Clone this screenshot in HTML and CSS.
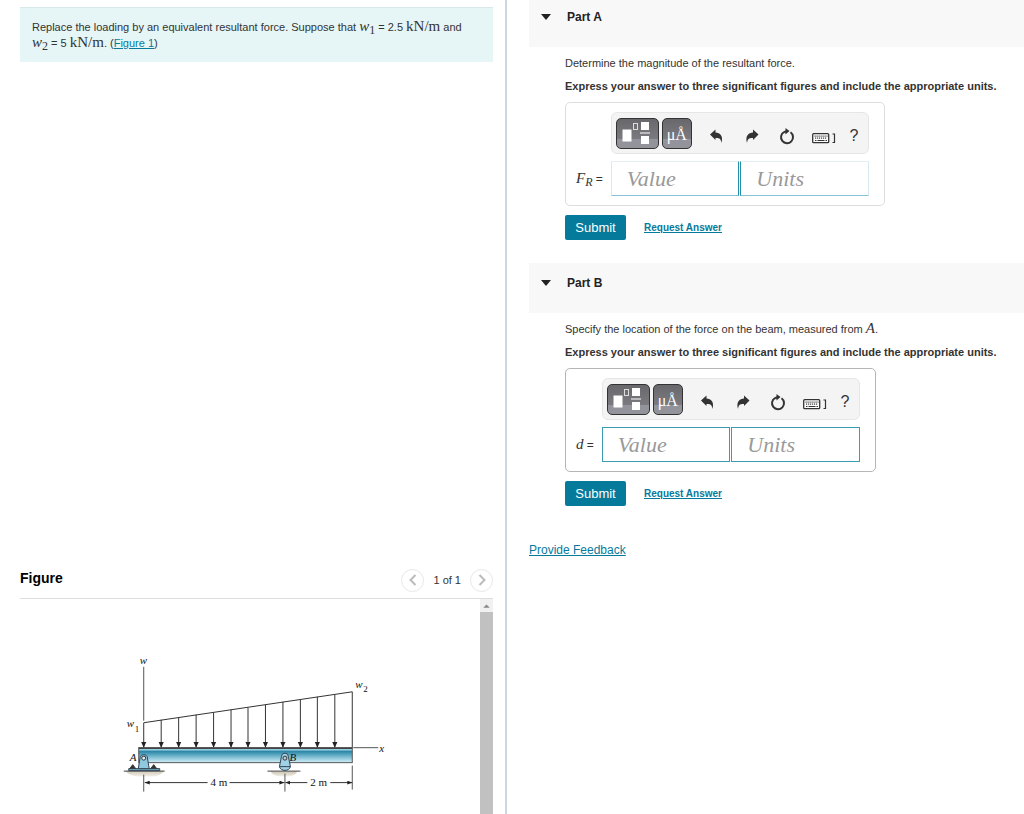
FILE: index.html
```html
<!DOCTYPE html>
<html lang="en">
<head>
<meta charset="utf-8">
<title>Equivalent Resultant Force</title>
<link rel="stylesheet" href="styles.css">
</head>
<body>
<svg class="defs" aria-hidden="true">
  <symbol id="templates" viewBox="1 1 41 29">
    <rect x="6.500" y="11.500" width="9" height="12" fill="#fff"/>
    <rect x="17.500" y="5.500" width="4" height="6" fill="none" stroke="#ddd"/>
    <rect x="25" y="4" width="8" height="8" fill="#fff"/>
    <rect x="24" y="14" width="10" height="2" fill="#bbb"/>
    <rect x="25" y="18" width="8" height="8" fill="#fff"/>
  </symbol>
  <symbol id="undo" viewBox="0 0 14 14">
    <path d="M0 5.500 5.500 .500v3C10 3.500 13.500 7 11.500 14c-.5-4-2-5.200-6-5V11Z" fill="#333"/>
  </symbol>
  <symbol id="redo" viewBox="0 0 14 14">
    <path d="M13.500 5.500 8 .500v3C3.500 3.500 0 7 2 14c.5-4 2-5.200 6-5V11Z" fill="#333"/>
  </symbol>
  <symbol id="reset" viewBox="0 0 16 17">
    <path d="M11.500 4.300A6 6 0 1 1 5 4" fill="none" stroke="#333" stroke-width="2"/>
    <path d="M6.500 0v6.500L10.500 3Z" fill="#333"/>
    <path d="M5 4.200 8 3" stroke="#333" stroke-width="2"/>
  </symbol>
  <symbol id="keyboard" viewBox="0 0 24 12">
    <rect x=".7" y="1.700" width="16" height="9" rx="1" fill="#fff" stroke="#333" stroke-width="1.300"/>
    <path d="M2.500 4.200h13M3 6.200h12" stroke="#444" stroke-width="1.200" stroke-dasharray="1.200 .8"/>
    <path d="M3 8.500h1.500M5.500 8.500h7M13.500 8.500h1.500" stroke="#333" stroke-width="1.200"/>
    <path d="M20.500 2h2v8.500h-2" fill="none" stroke="#333" stroke-width="1.200"/>
  </symbol>
</svg>

<main class="layout">
  <section class="left">
    <p class="statement">Replace the loading by an equivalent resultant force. Suppose that <span class="math"><i>w</i><sub>1</sub></span> = 2.5 <span class="math">kN/m</span> and <span class="math"><i>w</i><sub>2</sub></span> = 5 <span class="math">kN/m</span>. (<a href="#figure">Figure 1</a>)</p>

    <section class="figure" id="figure">
      <header class="figure-head">
        <h2>Figure</h2>
        <nav class="pager" aria-label="Figures">
          <button class="round" type="button" aria-label="Previous figure"><svg viewBox="0 0 10 12"><path d="M7.500 1 2.500 6l5 5"/></svg></button>
          <span>1 of 1</span>
          <button class="round" type="button" aria-label="Next figure"><svg viewBox="0 0 10 12"><path d="m2.500 1 5 5-5 5"/></svg></button>
        </nav>
      </header>
      <div class="figure-body">
        <svg class="beam" viewBox="20 599 461 215" role="img" aria-label="Beam with a linearly increasing distributed load">
          <defs>
            <linearGradient id="steel" x1="0" y1="0" x2="0" y2="1">
              <stop offset="0" stop-color="#a9dcec"/>
              <stop offset=".16" stop-color="#8cc8dc"/>
              <stop offset=".24" stop-color="#2b86a4"/>
              <stop offset=".4" stop-color="#4a9db8"/>
              <stop offset="1" stop-color="#d4f0fa"/>
            </linearGradient>
            <linearGradient id="ground" x1="0" y1="0" x2="0" y2="1">
              <stop offset="0" stop-color="#cdc6b4"/>
              <stop offset="1" stop-color="#f4f1ea"/>
            </linearGradient>
            <marker id="down" viewBox="0 0 6 6" refX="6" refY="3" markerWidth="6" markerHeight="6" markerUnits="userSpaceOnUse" orient="auto"><path d="M0 .3 6 3 0 5.700Z" fill="#222"/></marker>
            <marker id="dim" viewBox="0 0 5 4" refX="5" refY="2" markerWidth="5" markerHeight="4" markerUnits="userSpaceOnUse" orient="auto"><path d="M0 0 5 2 0 4Z" fill="#222"/></marker>
          </defs>
          <path class="axis" d="M144 667v54M354 748h25"/>
          <path class="line" d="M144 723 353 692V748"/>
          <g class="line">
            <path d="M144 723v25" marker-end="url(#down)"/><path d="M161.500 720v28" marker-end="url(#down)"/>
            <path d="M179 718v30" marker-end="url(#down)"/><path d="M196.500 715v33" marker-end="url(#down)"/>
            <path d="M214 713v35" marker-end="url(#down)"/><path d="M231.500 710v38" marker-end="url(#down)"/>
            <path d="M248.500 708v40" marker-end="url(#down)"/><path d="M266 705v43" marker-end="url(#down)"/>
            <path d="M283.500 702v46" marker-end="url(#down)"/><path d="M301 700v48" marker-end="url(#down)"/>
            <path d="M318 697v51" marker-end="url(#down)"/><path d="M335.500 695v53" marker-end="url(#down)"/>
          </g>
          <rect x="139" y="748" width="214" height="15" fill="url(#steel)" stroke="#555"/>
          <path d="M139 748.500h214" stroke="#444" stroke-width="1.500"/>
          <path d="M126 771h38c-2 5-8 6-18 6s-18-1-20-6Z" fill="url(#ground)"/>
          <path d="M124 771.500h41" stroke="#444"/>
          <path d="M129 771v-2h31v2Z" fill="#6daac0" stroke="#345"/>
          <path d="m130 769 3-4 3 4M151 769l3-4 3 4" fill="#333" stroke="#333"/>
          <path d="M138.500 769 140.500 757a4 4 0 0 1 7 0L149.500 769Z" fill="#8fc8df" stroke="#345"/>
          <circle cx="144" cy="758.500" r="2" fill="#def" stroke="#333"/>
          <path d="M271 772h27c-2 3-4 5-13 5s-12-2-14-5Z" fill="url(#ground)"/>
          <path d="M268 771.500h33" stroke="#444"/>
          <path d="M280 767 282 757a3.500 3.500 0 0 1 7 0L291 767c-1 5-10 5-11 0Z" fill="#9fd2e6" stroke="#345"/>
          <path d="M280 767h11" stroke="#345"/>
          <circle cx="285.500" cy="758.500" r="2" fill="#bcd" stroke="#333"/>
          <path class="axis" d="M144 775v17M285.500 774v18M353 766v24"/>
          <path class="line" d="M208 783H145" marker-end="url(#dim)"/><path class="line" d="M230 783h55" marker-end="url(#dim)"/>
          <path class="line" d="M308 783h-22" marker-end="url(#dim)"/><path class="line" d="M331 783h22" marker-end="url(#dim)"/>
          <g class="label">
            <text class="it" x="140" y="664">w</text>
            <text class="it" x="127" y="727">w</text><text class="small" x="135" y="732">1</text>
            <text class="it" x="356" y="688">w</text><text class="small" x="364" y="692">2</text>
            <text class="it" x="380" y="752">x</text>
            <text class="it" x="130" y="761">A</text><text class="it" x="290" y="761">B</text>
            <text x="211" y="786">4 m</text><text x="311" y="786">2 m</text>
          </g>
        </svg>
        <div class="scrollbar" aria-hidden="true">
          <svg viewBox="0 0 12 12"><path d="M3 8 6 5l3 3Z" fill="#888"/></svg>
          <div class="thumb"></div>
        </div>
      </div>
    </section>
  </section>

  <section class="right">
    <section class="part">
      <header class="part-head"><svg viewBox="0 0 10 6"><path d="M0 0h10L5 6Z"/></svg><h2>Part A</h2></header>
      <div class="part-body">
        <p>Determine the magnitude of the resultant force.</p>
        <p class="bold">Express your answer to three significant figures and include the appropriate units.</p>
        <form class="answer soft" id="form-a">
          <div class="toolbar">
            <button class="dark wide" type="button" aria-label="Templates"><svg><use href="#templates"/></svg></button>
            <button class="dark" type="button">μÅ</button>
            <button class="tool" type="button" aria-label="Undo"><svg><use href="#undo"/></svg></button>
            <button class="tool" type="button" aria-label="Redo"><svg><use href="#redo"/></svg></button>
            <button class="tool" type="button" aria-label="Reset"><svg class="reset"><use href="#reset"/></svg></button>
            <button class="tool shortcuts" type="button" aria-label="Keyboard shortcuts"><svg class="keys"><use href="#keyboard"/></svg></button>
            <button class="tool help" type="button">?</button>
          </div>
          <label for="value-a"><i>F<sub>R</sub></i> =</label>
          <div class="fields">
            <input id="value-a" type="text" placeholder="Value">
            <input type="text" placeholder="Units" aria-label="Units">
          </div>
        </form>
        <div class="actions"><button class="submit" type="submit" form="form-a">Submit</button><a href="#">Request Answer</a></div>
      </div>
    </section>

    <section class="part">
      <header class="part-head"><svg viewBox="0 0 10 6"><path d="M0 0h10L5 6Z"/></svg><h2>Part B</h2></header>
      <div class="part-body">
        <p>Specify the location of the force on the beam, measured from <span class="math"><i>A</i></span>.</p>
        <p class="bold">Express your answer to three significant figures and include the appropriate units.</p>
        <form class="answer" id="form-b">
          <div class="toolbar">
            <button class="dark wide" type="button" aria-label="Templates"><svg><use href="#templates"/></svg></button>
            <button class="dark" type="button">μÅ</button>
            <button class="tool" type="button" aria-label="Undo"><svg><use href="#undo"/></svg></button>
            <button class="tool" type="button" aria-label="Redo"><svg><use href="#redo"/></svg></button>
            <button class="tool" type="button" aria-label="Reset"><svg class="reset"><use href="#reset"/></svg></button>
            <button class="tool shortcuts" type="button" aria-label="Keyboard shortcuts"><svg class="keys"><use href="#keyboard"/></svg></button>
            <button class="tool help" type="button">?</button>
          </div>
          <label for="value-b"><i>d</i> =</label>
          <div class="fields">
            <input id="value-b" type="text" placeholder="Value">
            <input type="text" placeholder="Units" aria-label="Units">
          </div>
        </form>
        <div class="actions"><button class="submit" type="submit" form="form-b">Submit</button><a href="#">Request Answer</a></div>
      </div>
    </section>
    <a class="feedback" href="#">Provide Feedback</a>
  </section>
</main>
</body>
</html>
```
FILE: styles.css
```css
* { box-sizing: border-box; }
body {
  margin: 0;
  background: #fff;
  color: #333;
  font: 11px/16px "Liberation Sans", Arial, sans-serif;
}
p, h2 { margin: 0; }
a { color: #067a9c; }
button { padding: 0; border: 0; background: none; font: inherit; color: inherit; }
sub { font-size: 80%; line-height: 0; vertical-align: -3px; }
svg { display: block; }
.defs { position: absolute; width: 0; height: 0; }

.layout {
  display: grid;
  grid-template-columns: minmax(0, 507fr) minmax(0, 517fr);
  min-height: 100vh;
}
.left {
  display: flex;
  flex-direction: column;
  justify-content: space-between;
  padding: 7px 12px 0 20px;
  border-right: 2px solid #cbd6e0;
}
.statement {
  padding: 11px 20px 11px 12px;
  background: #e6f6f7;
  border-top: 1px solid #d9e9e9;
}
.math {
  font-family: "Liberation Serif", "Times New Roman", serif;
  font-size: 15px;
  line-height: 14px;
  white-space: nowrap;
}

.figure-head {
  display: flex;
  justify-content: space-between;
  align-items: center;
  height: 37px;
  border-bottom: 1px solid #ddd;
}
.figure-head h2 { font-size: 14px; padding-bottom: 4px; color: #000; }
.pager { display: flex; align-items: center; gap: 9px; }
.round {
  display: grid;
  place-items: center;
  width: 23px;
  height: 23px;
  border: 1px solid #e8e8e8;
  border-radius: 50%;
}
.round svg { width: 10px; height: 12px; fill: none; stroke: #bbb; stroke-width: 2; }
.figure-body { display: flex; }
.beam { flex: 1; min-width: 0; }
.axis { fill: none; stroke: #555; }
.line { fill: none; stroke: #333; }
.label { font: 11px "Liberation Serif", serif; fill: #111; }
.it { font-style: italic; }
.small { font-size: 9px; }
.scrollbar { display: flex; flex-direction: column; flex: 0 0 12px; background: #f1f1f1; }
.scrollbar svg { height: 13px; }
.thumb { flex: 1; background: #c1c1c1; }

.right { padding-left: 22px; }
.part-head {
  display: flex;
  gap: 16px;
  height: 50px;
  padding: 12px;
  background: #f8f8f8;
}
.part:first-child .part-head { margin-top: -3px; }
.part-head svg { width: 10px; height: 6px; margin-top: 5px; fill: #222; }
.part-head h2 { font-size: 12px; color: #222; }
.part-body { padding: 8px 0 23px 36px; }
.part-body p { margin-bottom: 7px; }
.part-body .bold { margin-bottom: 8px; font-weight: bold; white-space: nowrap; }
.answer {
  display: inline-grid;
  grid-template-columns: auto 258px;
  column-gap: 8px;
  row-gap: 7px;
  padding: 9px 15px 9px 10px;
  border: 1px solid #b5b5b5;
  border-radius: 5px;
  vertical-align: top;
}
.soft { border-color: #ddd; }
.toolbar {
  grid-column: 2;
  display: flex;
  align-items: center;
  height: 42px;
  padding-left: 4px;
  background: #f4f4f4;
  border: 1px solid #e6e6e6;
  border-radius: 6px;
}
.dark {
  flex: none;
  width: 30px;
  height: 31px;
  margin-right: 8px;
  padding-top: 3px;
  border: 1px solid #333;
  border-radius: 5px;
  background: linear-gradient(#68686c, #7a7a80 70%, #93939c 70%);
  color: #fff;
  font: 16px "Liberation Serif", serif;
}
.wide { width: 43px; margin-right: 3px; padding: 0; }
.wide svg { width: 41px; height: 29px; }
.tool { display: grid; place-items: center; flex: 0 0 35px; height: 31px; padding-top: 6px; }
.tool svg { width: 14px; height: 14px; }
.tool .reset { width: 16px; height: 17px; }
.tool .keys { width: 24px; height: 12px; }
.shortcuts { padding: 10px 0 0 4px; }
.help { flex-basis: 28px; font-size: 16px; }
.answer label { align-self: center; font-size: 12px; }
.answer label i { font: italic 15px/16px "Liberation Serif", serif; }
.fields { display: grid; grid-template-columns: 1fr 1fr; gap: 1px; }
.fields input {
  min-width: 0;
  height: 35px;
  padding: 1px 14px 0 15px;
  border: 1px solid #3b9bb5;
  background: #fff;
  font: italic 22px "Liberation Serif", serif;
}
.fields input::placeholder { color: #999; opacity: 1; }
.soft .fields input { border-color: #e3f1f7 #d9ebf2 #86c2d3; }
.soft .fields input:first-child { border-right-color: #238eaa; }
.soft .fields input:last-child { border-left-color: #238eaa; }
.actions { display: flex; align-items: center; gap: 18px; margin-top: 9px; font-size: 10px; font-weight: bold; }
.submit {
  width: 61px;
  height: 25px;
  background: #057a9b;
  border-radius: 2px;
  color: #fff;
  font-size: 13px;
  font-weight: normal;
}
.feedback { display: inline-block; margin-top: 13px; font-size: 12px; }
```
